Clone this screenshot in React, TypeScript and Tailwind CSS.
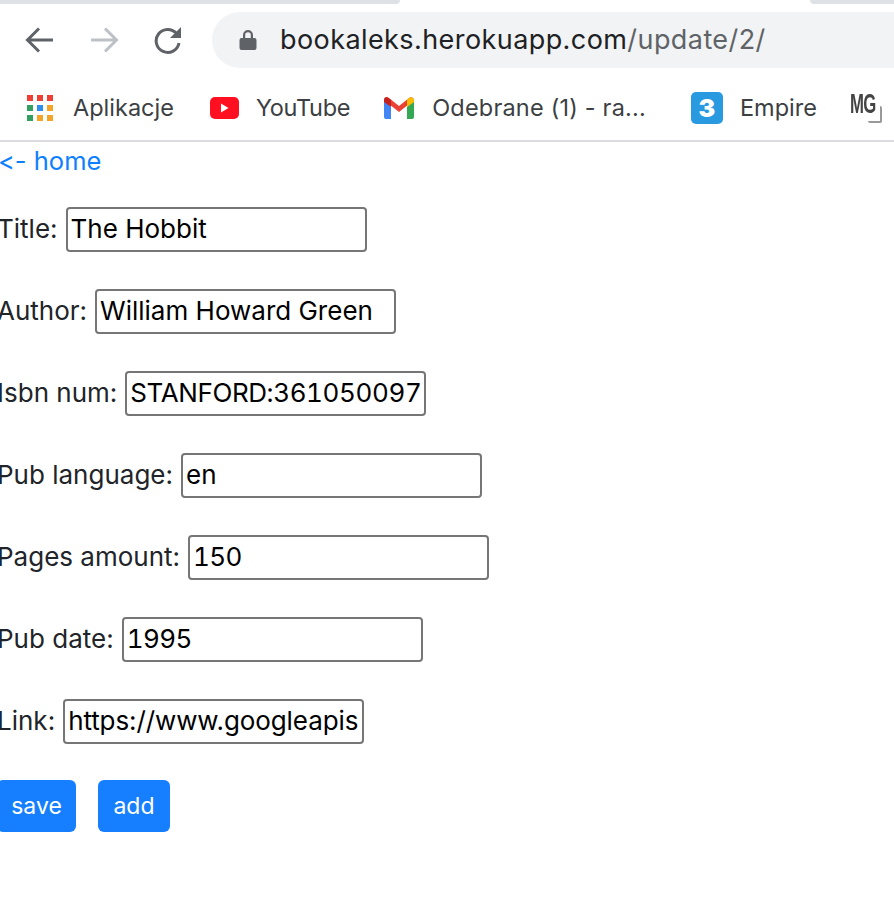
import React from "react";

const sans = "font-['Inter','Liberation_Sans',sans-serif] [font-variant-ligatures:none] [font-feature-settings:'calt'_0]";

const fields = [
  { label: "Title:", value: "The Hobbit", inputClass: "" },
  { label: "Author:", value: "William Howard Green", inputClass: "" },
  { label: "Isbn num:", value: "STANFORD:361050097", inputClass: "tabular-nums tracking-[-0.4px]" },
  { label: "Pub language:", value: "en", inputClass: "" },
  { label: "Pages amount:", value: "150", inputClass: "tabular-nums tracking-[-0.6px]" },
  { label: "Pub date:", value: "1995", inputClass: "tabular-nums tracking-[-0.6px]" },
  { label: "Link:", value: "https://www.googleapis.com/books/v1/volumes", inputClass: "tracking-[-0.1px]" },
];

const appColors = [
  "#ef3e36", "#ef3e36", "#ef3e36",
  "#34a05f", "#2f8ff0", "#f4a429",
  "#34a05f", "#f4a429", "#f4a429",
];

const Bookmark: React.FC<{ icon: React.ReactNode; label: string; className: string; labelClass?: string }> = ({
  icon,
  label,
  className,
  labelClass = "",
}) => (
  <div className={`flex items-center ${className}`}>
    {icon}
    <span className={`text-[23.5px] text-[#3c4043] whitespace-nowrap ${labelClass}`}>{label}</span>
  </div>
);

const Toolbar = () => (
  <div className="h-[56px] flex items-center">
    <svg width="30" height="28" viewBox="0 0 30 28" className="ml-[25px]" fill="none" stroke="#5f6368" strokeWidth="3">
      <path d="M28 14H3M14 2.500 2.500 14 14 25.500" />
    </svg>
    <svg width="30" height="28" viewBox="0 0 30 28" className="ml-[34px]" fill="none" stroke="#bdc1c6" strokeWidth="3">
      <path d="M2 14h25M16 2.500 27.500 14 16 25.500" />
    </svg>
    <svg width="30" height="28" viewBox="0 0 30 28" className="ml-[34px]" fill="none">
      <path d="M23.500 7.500A11.500 11.500 0 1 0 26 17" stroke="#5f6368" strokeWidth="3" />
      <path d="M28 1v11H17z" fill="#5f6368" />
    </svg>
    <div className="ml-[29px] flex-1 h-[56px] bg-[#f1f3f4] rounded-l-[28px] flex items-center">
      <svg width="18" height="22" viewBox="0 0 18 22" className="ml-[27px]" fill="#5f6368">
        <path d="M4 9V6a5 5 0 0 1 10 0v3h1.500A2 2 0 0 1 17.500 11v8a2 2 0 0 1-2 2h-13a2 2 0 0 1-2-2v-8a2 2 0 0 1 2-2zm2.200 0h5.600V6a2.800 2.800 0 0 0-5.600 0z" />
      </svg>
      <span className="ml-[23px] pt-[1px] text-[27px] tracking-[0.42px] text-[#202124] whitespace-nowrap">
        bookaleks.herokuapp.com<span className="text-[#5f6368]">/update/2/</span>
      </span>
    </div>
  </div>
);

const Bookmarks = () => (
  <div className="h-[72px] pt-[8px] flex items-center">
    <Bookmark
      className="ml-[27px]"
      label="Aplikacje"
      icon={
        <div className="grid grid-cols-3 gap-[4px] w-[26px] mr-[20px]">
          {appColors.map((c, i) => (
            <div key={i} className="w-[6px] h-[6px]" style={{ backgroundColor: c }} />
          ))}
        </div>
      }
    />
    <Bookmark
      className="ml-[36px]"
      label="YouTube"
      labelClass="tracking-[-0.3px]"
      icon={
        <svg width="29" height="22" viewBox="0 0 29 22" className="mr-[17px]">
          <rect width="29" height="22" rx="5" fill="#ff0f1f" />
          <path d="M11 6.500v9l7.500-4.500z" fill="#fff" />
        </svg>
      }
    />
    <Bookmark
      className="ml-[34px]"
      label="Odebrane (1) - ra..."
      labelClass="tracking-[0.2px]"
      icon={
        <svg width="30" height="22" viewBox="0 0 30 22" className="mr-[18px]" fill="none">
          <path d="M0 3v17a2 2 0 0 0 2 2h5V10z" fill="#4285f4" />
          <path d="M30 3v17a2 2 0 0 1-2 2h-5V10z" fill="#34a853" />
          <path d="M0 3a3 3 0 0 1 5-2l10 8 10-8a3 3 0 0 1 5 2L15 15z" fill="#ea4335" />
          <path d="M30 3a3 3 0 0 0-5-2l-2 1.600V10l7-5z" fill="#fbbc04" />
          <path d="M0 3a3 3 0 0 1 3-3l4 3v7L0 5z" fill="#c5221f" />
        </svg>
      }
    />
    <Bookmark
      className="ml-[45px]"
      label="Empire"
      icon={
        <div className="w-[32px] h-[32px] mr-[17px] rounded-[5px] bg-[#2a9ae0] flex items-center justify-center text-white text-[25px] font-black leading-none">
          3
        </div>
      }
    />
    <div className="ml-[33px] relative w-[32px] h-[30px]">
      <span className="block origin-left scale-x-[0.62] text-[27px] leading-[22px] font-bold font-['Liberation_Sans',sans-serif] tracking-[-1px] text-[#444] blur-[0.5px] whitespace-nowrap">
        MG
      </span>
      <div className="absolute right-0 bottom-0 w-[14px] h-[17px] border-2 border-[#999] border-t-0 border-l-0 rounded-[2px]" />
    </div>
  </div>
);

const BookField: React.FC<{ label: string; value: string; inputClass: string }> = ({ label, value, inputClass }) => (
  <div className="h-[45px] mb-[37px] flex items-center text-[#212529] text-[26px]">
    <label className="whitespace-nowrap mr-[8px] pb-[2px]">{label}</label>
    <input
      readOnly
      value={value}
      className={`w-[301px] h-[45px] shrink-0 border-2 border-[#767676] rounded-[4px] px-[3px] pb-[2px] bg-white text-black text-[26px] outline-none ${inputClass}`}
    />
  </div>
);

export default function App() {
  return (
    <div className={`w-[894px] h-[920px] overflow-hidden bg-white ${sans}`}>
      <div className="h-[12px] flex">
        <div className="w-[400px] h-[4px] bg-[#dee1e6] rounded-br-[12px]" />
        <div className="flex-1" />
        <div className="w-[84px] h-[4px] bg-[#dee1e6] rounded-bl-[12px]" />
      </div>
      <Toolbar />
      <Bookmarks />
      <div className="h-[2px] bg-[#dadce0]" />
      <main className="-ml-[3px]">
        <a href="#" className="block h-[38px] leading-[38px] pl-[1px] text-[25.500px] text-[#0d7fff] mb-[27px]">
          &lt;- home
        </a>
        {fields.map((f) => (
          <BookField key={f.label} label={f.label} value={f.value} inputClass={f.inputClass} />
        ))}
        <div className="flex gap-[22px] -mt-[1px]">
          <button className="h-[52px] w-[79px] rounded-[6px] bg-[#157fff] text-white text-[23px]">save</button>
          <button className="h-[52px] w-[72px] rounded-[6px] bg-[#157fff] text-white text-[23px]">add</button>
        </div>
      </main>
    </div>
  );
}
